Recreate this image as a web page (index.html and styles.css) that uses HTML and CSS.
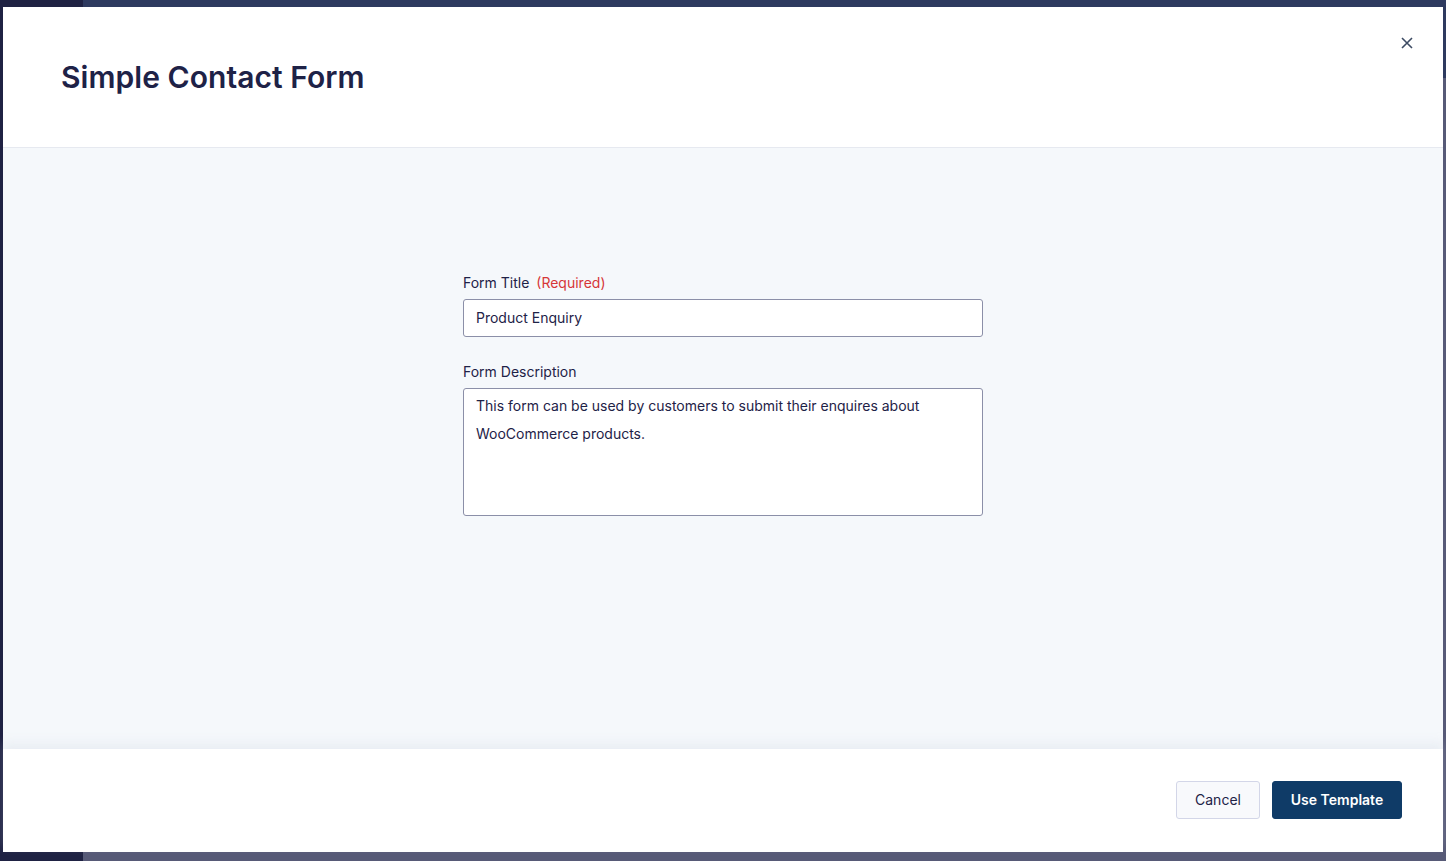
FILE: index.html
```html
<!DOCTYPE html>
<html>
<head>
	<title>Simple Contact Form</title>
	<link rel="stylesheet" href="styles.css">
</head>
<body>
	<div class="backdrop">
		<div class="side"></div>
		<div class="main">
			<div class="topbar"></div>
			<div class="content"></div>
		</div>
	</div>

	<div class="modal">
		<div class="modal-header">
			<h1 class="modal-title">Simple Contact Form</h1>
			<button class="close" type="button" aria-label="Close">
				<svg width="12" height="12" viewBox="0 0 12 12">
					<path d="M1 1L11 11M11 1L1 11" stroke="#3d4b63" stroke-width="1.6" fill="none"/>
				</svg>
			</button>
		</div>

		<div class="modal-body">
			<form class="form">
				<div class="field">
					<label class="label" for="title">Form Title <span class="req">(Required)</span></label>
					<input class="input" id="title" type="text" value="Product Enquiry">
				</div>
				<div class="field">
					<label class="label" for="desc">Form Description</label>
					<textarea class="input textarea" id="desc">This form can be used by customers to submit their enquires about WooCommerce products.</textarea>
				</div>
			</form>
		</div>

		<div class="modal-footer">
			<button class="btn btn-cancel" type="button">Cancel</button>
			<button class="btn btn-primary" type="button">Use Template</button>
		</div>
	</div>
</body>
</html>
```

FILE: styles.css
```css
* {
	box-sizing: border-box;
}
html, body {
	margin: 0;
	height: 100%;
}
body {
	font-family: Inter, "Noto Sans", sans-serif;
	color: #1e2247;
	overflow: hidden;
}

/* page behind the dialog */
.backdrop {
	display: flex;
	height: 100%;
}
.side {
	width: 83px;
	background: #1f2243;
}
.main {
	flex: 1;
	display: flex;
	flex-direction: column;
}
.topbar {
	height: 78px;
	background: #2e3a5f;
}
.content {
	flex: 1;
	background: #575a77;
}

/* dialog */
.modal {
	position: absolute;
	left: 3px;
	top: 7px;
	width: 1440px;
	height: 845px;
	background: #fff;
	display: flex;
	flex-direction: column;
}
.modal-header {
	height: 141px;
	padding: 0 58px;
	display: flex;
	align-items: center;
	border-bottom: 1px solid #e6e9f0;
	position: relative;
}
.modal-title {
	margin: 0;
	margin-top: -1px;
	font-size: 30px;
	font-weight: 600;
	color: #1e2247;
	letter-spacing: 0.05px;
}
.close {
	position: absolute;
	top: 26px;
	right: 26px;
	width: 20px;
	height: 20px;
	padding: 4px;
	border: 0;
	background: none;
	cursor: pointer;
	display: flex;
}

.modal-body {
	flex: 1;
	background: #f5f8fb;
	padding-top: 126px;
	display: flex;
	justify-content: center;
}
.form {
	width: 520px;
	display: flex;
	flex-direction: column;
	gap: 26px;
}
.field {
	display: flex;
	flex-direction: column;
	gap: 8px;
}
.label {
	font-size: 14px;
	font-weight: 400;
	line-height: 17px;
	color: #1e2247;
}
.req {
	color: #d63638;
	margin-left: 3px;
}
.input {
	width: 100%;
	height: 38px;
	padding: 0 12px 1px;
	border: 1px solid #8b8fa8;
	border-radius: 3px;
	background: #fff;
	font-family: Inter, "Noto Sans", sans-serif;
	font-size: 14px;
	color: #1e2247;
}
.textarea {
	height: 128px;
	padding: 3px 12px;
	line-height: 28px;
	resize: none;
}

.modal-footer {
	height: 103px;
	padding: 0 41px 2px;
	display: flex;
	align-items: center;
	justify-content: flex-end;
	gap: 12px;
	box-shadow: 0 -6px 10px rgba(200, 206, 225, 0.25);
	position: relative;
}
.btn {
	height: 38px;
	border-radius: 3px;
	font-family: Inter, "Noto Sans", sans-serif;
	font-size: 14px;
	cursor: pointer;
}
.btn-cancel {
	width: 84px;
	background: #f8f9fc;
	border: 1px solid #d3d6e8;
	color: #1e2247;
	font-weight: 400;
}
.btn-primary {
	width: 130px;
	background: #0f3b67;
	border: 1px solid #0f3b67;
	color: #fff;
	font-weight: 600;
}
```
